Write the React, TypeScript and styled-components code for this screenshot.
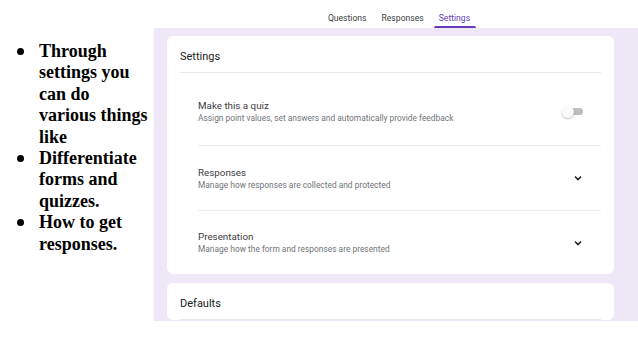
import React from "react";
import styled, { createGlobalStyle } from "styled-components";

const GlobalStyle = createGlobalStyle`
  html, body {
    margin: 0;
    padding: 0;
    background: #ffffff;
  }
`;

const Page = styled.div`
  display: flex;
  width: 638px;
  height: 359px;
  overflow: hidden;
  background: #ffffff;
`;

const Notes = styled.ul`
  width: 154px;
  box-sizing: border-box;
  flex-shrink: 0;
  margin: 0;
  padding: 41px 6px 0 0;
  list-style: none;
  font-family: "Liberation Serif", serif;
  font-weight: bold;
  font-size: 18px;
  line-height: 21.4px;
  color: #000;
`;

const Note = styled.li`
  position: relative;
  padding-left: 39px;
  &::before {
    content: "";
    position: absolute;
    left: 17px;
    top: 7px;
    width: 7px;
    height: 7px;
    border-radius: 50%;
    background: #000;
  }
`;

const Shot = styled.div`
  width: 484px;
  height: 321px;
  display: flex;
  flex-direction: column;
  font-family: Roboto, "Liberation Sans", sans-serif;
`;

const TabBar = styled.div`
  height: 28px;
  box-sizing: border-box;
  display: flex;
  justify-content: center;
  gap: 15px;
  background: #ffffff;
  padding-left: 6px;
`;

const Tab = styled.div<{ $active?: boolean }>`
  position: relative;
  padding: 13px 0 0;
  font-size: 8.6px;
  color: ${(p) => (p.$active ? "#673ab7" : "#3c4043")};
  &::after {
    content: "";
    display: ${(p) => (p.$active ? "block" : "none")};
    position: absolute;
    left: -5px;
    right: -6px;
    bottom: 0;
    height: 2px;
    border-radius: 2px 2px 0 0;
    background: #673ab7;
  }
`;

const Canvas = styled.div`
  flex: 1;
  background: #ede7f6;
  padding: 8px 24px 0 13px;
  display: flex;
  flex-direction: column;
  gap: 9px;
  overflow: hidden;
`;

const Card = styled.div`
  background: #ffffff;
  border-radius: 6px;
  padding: 0 13px 0 13px;
  flex-shrink: 0;
`;

const CardTitle = styled.div<{ $offset?: number }>`
  box-sizing: border-box;
  font-size: 11px;
  color: #202124;
  height: 37px;
  display: flex;
  align-items: center;
  padding-top: ${(p) => p.$offset ?? 4}px;
  border-bottom: 1px solid #e8e8ec;
`;

const Rows = styled.div`
  padding-left: 18px;
`;

const Row = styled.div<{ $first?: boolean; $last?: boolean }>`
  box-sizing: border-box;
  display: flex;
  align-items: center;
  height: ${(p) => (p.$first ? 73 : p.$last ? 63 : 65)}px;
  padding-top: ${(p) => (p.$first ? 5 : 0)}px;
  border-bottom: ${(p) => (p.$last ? "none" : "1px solid #ececf0")};
`;

const RowText = styled.div`
  flex: 1;
  display: flex;
  flex-direction: column;
  gap: 2px;
`;

const RowTitle = styled.div`
  font-size: 9.8px;
  color: #3c4043;
`;

const RowSub = styled.div`
  font-size: 8.4px;
  color: #70757a;
`;

const Toggle = styled.div`
  position: relative;
  width: 18px;
  height: 7px;
  border-radius: 4px;
  background: #bdbdbd;
  margin-right: 18px;
  &::before {
    content: "";
    position: absolute;
    left: -3px;
    top: -2.5px;
    width: 12px;
    height: 12px;
    border-radius: 50%;
    background: #fafafa;
    box-shadow: 0 1px 2px rgba(0, 0, 0, 0.25);
  }
`;

const Chevron = styled.svg`
  width: 10px;
  height: 10px;
  margin-right: 18px;
`;

const Down = () => (
  <Chevron viewBox="0 0 10 10">
    <path d="M2 3.5 L5 6.5 L8 3.5" fill="none" stroke="#202124" strokeWidth="1.6" />
  </Chevron>
);

export default function App() {
  return (
    <>
      <GlobalStyle />
      <Page>
        <Notes>
          <Note>Through settings you can do various things like</Note>
          <Note>Differentiate forms and quizzes.</Note>
          <Note>How to get responses.</Note>
        </Notes>
        <Shot>
          <TabBar>
            <Tab>Questions</Tab>
            <Tab>Responses</Tab>
            <Tab $active>Settings</Tab>
          </TabBar>
          <Canvas>
            <Card>
              <CardTitle>Settings</CardTitle>
              <Rows>
                <Row $first>
                  <RowText>
                    <RowTitle>Make this a quiz</RowTitle>
                    <RowSub>Assign point values, set answers and automatically provide feedback</RowSub>
                  </RowText>
                  <Toggle />
                </Row>
                <Row>
                  <RowText>
                    <RowTitle>Responses</RowTitle>
                    <RowSub>Manage how responses are collected and protected</RowSub>
                  </RowText>
                  <Down />
                </Row>
                <Row $last>
                  <RowText>
                    <RowTitle>Presentation</RowTitle>
                    <RowSub>Manage how the form and responses are presented</RowSub>
                  </RowText>
                  <Down />
                </Row>
              </Rows>
            </Card>
            <Card>
              <CardTitle $offset={5}>Defaults</CardTitle>
            </Card>
          </Canvas>
        </Shot>
      </Page>
    </>
  );
}
